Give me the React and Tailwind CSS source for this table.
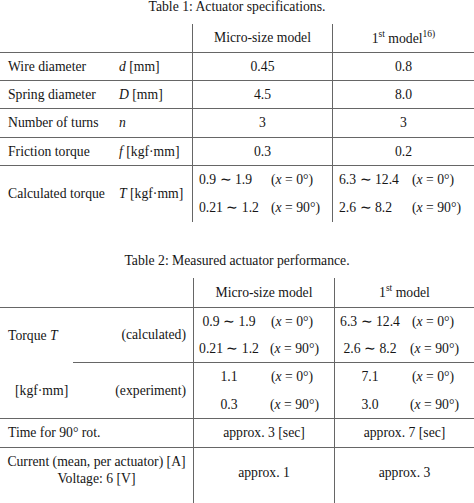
import React from "react";

const L = "border-[#666]";

function M({ children }) {
  return <span className="italic">{children}</span>;
}

function Paren({ v }) {
  return (
    <span>
      (<M>x</M> = {v}°)
    </span>
  );
}

function Sup({ children }) {
  return <span className="align-super text-[9.5px] leading-none">{children}</span>;
}

function T1Row({ label, sym, a, b, h }) {
  return (
    <div className={`flex border-b ${L} ${h}`}>
      <div className="w-[192px] flex items-center">
        <span className="w-[119px] pl-[8px]">{label}</span>
        <span>{sym}</span>
      </div>
      <div className={`w-[140px] border-l ${L} flex items-center justify-center`}>{a}</div>
      <div className={`flex-1 border-l ${L} flex items-center justify-center`}>{b}</div>
    </div>
  );
}

export default function App() {
  return (
    <div className="font-['Liberation_Serif'] w-[474px] h-[503px] overflow-hidden bg-white text-[#151515] text-[13.7px] leading-[16px]">
      {/* Table 1 */}
      <div className="h-[24px] text-center leading-[14px]">Table 1: Actuator specifications.</div>
      <div className="flex flex-col">
        <div className={`flex border-b ${L} h-[29px]`}>
          <div className="w-[192px]" />
          <div className={`w-[140px] border-l ${L} flex items-center justify-center`}>Micro-size model</div>
          <div className={`flex-1 border-l ${L} flex items-center justify-center`}>
            <span>
              1<Sup>st</Sup> model<Sup>16)</Sup>
            </span>
          </div>
        </div>
        <T1Row h="h-[28px]" label="Wire diameter" sym={<><M>d</M> [mm]</>} a="0.45" b="0.8" />
        <T1Row h="h-[28px]" label="Spring diameter" sym={<><M>D</M> [mm]</>} a="4.5" b="8.0" />
        <T1Row h="h-[29px]" label="Number of turns" sym={<M>n</M>} a="3" b="3" />
        <T1Row h="h-[28px]" label="Friction torque" sym={<><M>f</M> [kgf·mm]</>} a="0.3" b="0.2" />
        <div className="flex h-[56px]">
          <div className="w-[192px] flex items-center">
            <span className="w-[119px] pl-[8px]">Calculated torque</span>
            <span>
              <M>T</M> [kgf·mm]
            </span>
          </div>
          <div className={`w-[140px] border-l ${L} flex flex-col`}>
            <div className="h-[28px] flex items-center">
              <span className="w-[78px] pl-[6px]">0.9 ∼ 1.9</span>
              <Paren v="0" />
            </div>
            <div className="h-[28px] flex items-center">
              <span className="w-[78px] pl-[6px]">0.21 ∼ 1.2</span>
              <Paren v="90" />
            </div>
          </div>
          <div className={`flex-1 border-l ${L} flex flex-col`}>
            <div className="h-[28px] flex items-center">
              <span className="w-[79px] pl-[6px]">6.3 ∼ 12.4</span>
              <Paren v="0" />
            </div>
            <div className="h-[28px] flex items-center">
              <span className="w-[79px] pl-[6px]">2.6 ∼ 8.2</span>
              <Paren v="90" />
            </div>
          </div>
        </div>
      </div>

      {/* Table 2 */}
      <div className="mt-[32px] h-[24px] text-center leading-[14px]">Table 2: Measured actuator performance.</div>
      <div className="flex flex-col">
        <div className={`flex border-b ${L} h-[30px]`}>
          <div className="w-[193px]" />
          <div className={`w-[141px] border-l ${L} flex items-center justify-center`}>Micro-size model</div>
          <div className={`flex-1 border-l ${L} flex items-center justify-center`}>
            <span>
              1<Sup>st</Sup> model
            </span>
          </div>
        </div>
        {/* torque calculated */}
        <div className="flex h-[55px]">
          <div className="w-[193px] flex">
            <div className="w-[73px] flex items-center pl-[8px] whitespace-nowrap">
              Torque&nbsp;<M>T</M>
            </div>
            <div className={`flex-1 border-b ${L} flex items-center justify-end pr-[7px]`}>(calculated)</div>
          </div>
          <div className={`w-[141px] border-l border-b ${L} flex flex-col`}>
            <div className="h-[27px] flex items-center">
              <span className="w-[70px] text-center">0.9 ∼ 1.9</span>
              <span className="pl-[7px]"><Paren v="0" /></span>
            </div>
            <div className="h-[27px] flex items-center">
              <span className="w-[70px] text-center">0.21 ∼ 1.2</span>
              <span className="pl-[6px]"><Paren v="90" /></span>
            </div>
          </div>
          <div className={`flex-1 border-l border-b ${L} flex flex-col`}>
            <div className="h-[27px] flex items-center">
              <span className="w-[70px] text-center">6.3 ∼ 12.4</span>
              <span className="pl-[7px]"><Paren v="0" /></span>
            </div>
            <div className="h-[27px] flex items-center">
              <span className="w-[70px] text-center">2.6 ∼ 8.2</span>
              <span className="pl-[5px]"><Paren v="90" /></span>
            </div>
          </div>
        </div>
        {/* torque experiment */}
        <div className={`flex border-b ${L} h-[56px]`}>
          <div className="w-[193px] flex">
            <div className="w-[73px] flex items-center pl-[15px]">[kgf·mm]</div>
            <div className="flex-1 flex items-center justify-end pr-[7px]">(experiment)</div>
          </div>
          <div className={`w-[141px] border-l ${L} flex flex-col`}>
            <div className="h-[28px] flex items-center">
              <span className="w-[70px] text-center">1.1</span>
              <span className="pl-[7px]"><Paren v="0" /></span>
            </div>
            <div className="h-[27px] flex items-center">
              <span className="w-[70px] text-center">0.3</span>
              <span className="pl-[6px]"><Paren v="90" /></span>
            </div>
          </div>
          <div className={`flex-1 border-l ${L} flex flex-col`}>
            <div className="h-[28px] flex items-center">
              <span className="w-[70px] text-center">7.1</span>
              <span className="pl-[7px]"><Paren v="0" /></span>
            </div>
            <div className="h-[27px] flex items-center">
              <span className="w-[70px] text-center">3.0</span>
              <span className="pl-[5px]"><Paren v="90" /></span>
            </div>
          </div>
        </div>
        {/* time */}
        <div className={`flex border-b ${L} h-[29px]`}>
          <div className="w-[193px] flex items-center pl-[8px]">Time for 90° rot.</div>
          <div className={`w-[141px] border-l ${L} flex items-center justify-center`}>approx. 3 [sec]</div>
          <div className={`flex-1 border-l ${L} flex items-center justify-center`}>approx. 7 [sec]</div>
        </div>
        {/* current */}
        <div className="flex h-[56px]">
          <div className="w-[193px] pt-[5px] text-center leading-[17px]">
            <div>Current (mean, per actuator) [A]</div>
            <div>Voltage: 6 [V]</div>
          </div>
          <div className={`w-[141px] border-l ${L} pt-[16px] text-center leading-[17px]`}>approx. 1</div>
          <div className={`flex-1 border-l ${L} pt-[16px] text-center leading-[17px]`}>approx. 3</div>
        </div>
      </div>
    </div>
  );
}
